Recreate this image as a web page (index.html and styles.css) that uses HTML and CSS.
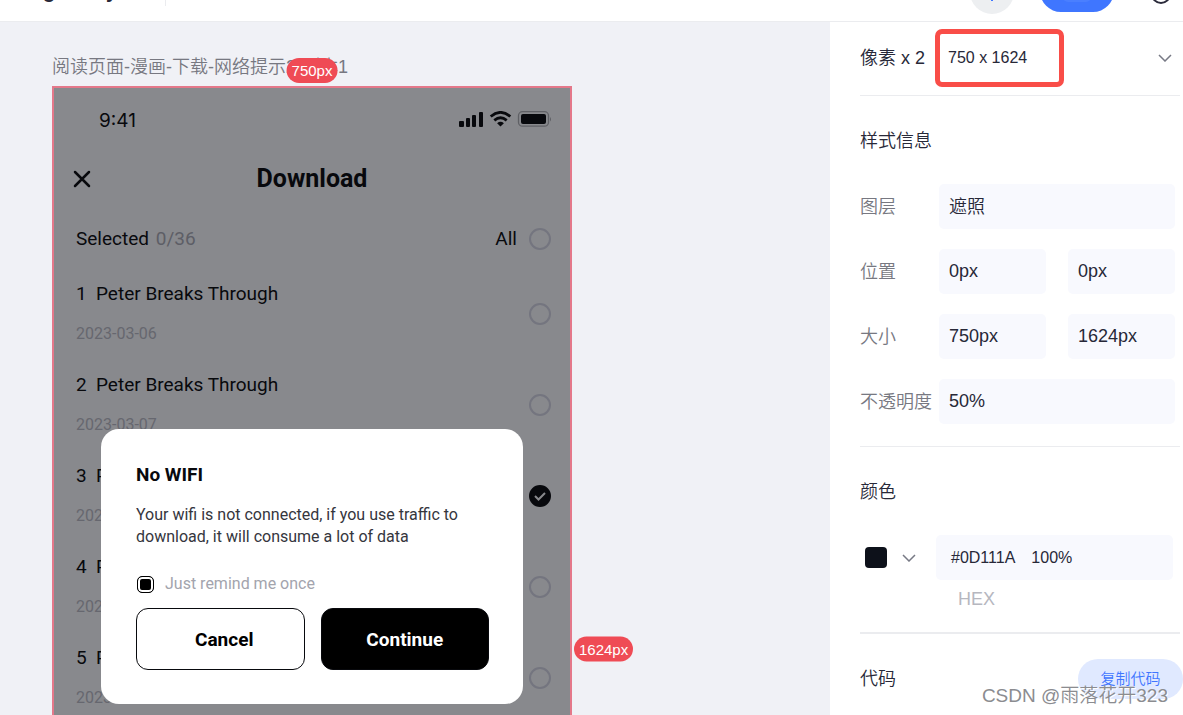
FILE: index.html
```html
<!DOCTYPE html>
<html lang="zh-CN">
<head>
    <meta charset="UTF-8">
    <meta name="viewport" content="width=device-width, initial-scale=1.0">
    <title>阅读页面-漫画-下载</title>
    <link rel="stylesheet" href="styles.css">
</head>
<body>
    <header class="topbar">
        <span class="project">g</span>
        <span class="project project-end">y</span>
        <span class="topbar-line"></span>
        <div class="topbar-actions">
            <button class="btn-round" aria-label="+"><svg width="20" height="20" viewBox="0 0 20 20"><path d="M10 1v18M2 10h16" stroke="#3f76ff" stroke-width="2"/></svg></button>
            <button class="btn-blue"><span class="btn-blue-inner"></span></button>
            <svg class="avatar" width="22" height="22" viewBox="0 0 22 22"><circle cx="11" cy="11" r="9" fill="none" stroke="#2b2b3b" stroke-width="2"/></svg>
        </div>
    </header>

    <div class="workspace">
        <main class="canvas">
            <h1 class="artboard-name">阅读页面-漫画-下载-网络提示2-副本1</h1>
            <div class="artboard">
                <span class="size-tag size-tag-width">750px</span>
                <span class="size-tag size-tag-height">1624px</span>
                <div class="screen">
                    <div class="status-bar">
                        <span class="clock">9:41</span>
                        <svg width="92" height="18" viewBox="0 0 92 18">
                            <g fill="#08090d">
                                <rect x="0" y="10" width="5" height="6" rx="1"/>
                                <rect x="7" y="7" width="4" height="9" rx="1"/>
                                <rect x="13" y="4" width="4" height="12" rx="1"/>
                                <rect x="20" y="1" width="4" height="15" rx="1"/>
                                <path d="M41.500 15.500l-3.400-3.300q3.400-2.700 6.800 0z"/>
                                <rect x="62" y="3" width="25" height="10" rx="2"/>
                            </g>
                            <g fill="none" stroke="#08090d" stroke-width="2.800">
                                <path d="M31.700 5.500q9.800-8.200 19.600 0"/>
                                <path d="M35.300 9.300q6.200-5 12.400 0"/>
                            </g>
                            <rect x="59.500" y=".700" width="30" height="14.500" rx="4" fill="none" stroke="#5f6065" stroke-width="1.300"/>
                            <path d="M91 6q2 2 0 4.500z" fill="#5f6065"/>
                        </svg>
                    </div>
                    <div class="nav-bar">
                        <button class="close" aria-label="Close"><svg width="18" height="18" viewBox="0 0 18 18"><path d="M2 2l14 14M16 2L2 16" stroke="#08090d" stroke-width="2.500" stroke-linecap="round"/></svg></button>
                        <h2 class="screen-title">Download</h2>
                    </div>
                    <div class="select-bar">
                        <span>Selected <span class="muted">0/36</span></span>
                        <label class="all">All <input class="circle" type="checkbox"></label>
                    </div>
                    <ul class="chapters">
                        <li class="chapter">
                            <label for="ch1"><span class="num">1</span>Peter Breaks Through</label>
                            <input class="circle" type="checkbox" id="ch1">
                            <span class="date">2023-03-06</span>
                        </li>
                        <li class="chapter">
                            <label for="ch2"><span class="num">2</span>Peter Breaks Through</label>
                            <input class="circle" type="checkbox" id="ch2">
                            <span class="date">2023-03-07</span>
                        </li>
                        <li class="chapter">
                            <label for="ch3"><span class="num">3</span>Peter Breaks Through</label>
                            <span class="checked-box">
                                <input class="circle" type="checkbox" id="ch3" checked>
                                <svg class="tick" width="22" height="22" viewBox="0 0 22 22"><path d="M6 11l3.500 3.500L16 8" fill="none" stroke="#88898d" stroke-width="2"/></svg>
                            </span>
                            <span class="date">2023-03-08</span>
                        </li>
                        <li class="chapter">
                            <label for="ch4"><span class="num">4</span>Peter Breaks Through</label>
                            <input class="circle" type="checkbox" id="ch4">
                            <span class="date">2023-03-09</span>
                        </li>
                        <li class="chapter">
                            <label for="ch5"><span class="num">5</span>Peter Breaks Through</label>
                            <input class="circle" type="checkbox" id="ch5">
                            <span class="date">2023-03-10</span>
                        </li>
                    </ul>
                </div>

                <div class="dialog" role="dialog" aria-labelledby="dialogTitle">
                    <h3 class="dialog-title" id="dialogTitle">No WIFI</h3>
                    <p class="dialog-text">Your wifi is not connected, if you use traffic to download, it will consume a lot of data</p>
                    <label class="remind"><input class="remind-box" type="checkbox" checked>Just remind me once</label>
                    <div class="dialog-buttons">
                        <button class="btn">Cancel</button>
                        <button class="btn btn-dark">Continue</button>
                    </div>
                </div>
            </div>
        </main>

        <aside class="panel">
            <section class="section device">
                <span class="scale">像素 x 2</span>
                <span class="resolution">750 x 1624</span>
                <button class="chevron" aria-label="展开"><svg width="14" height="8" viewBox="0 0 14 8"><path d="M1 1l6 6 6-6" fill="none" stroke="#777985" stroke-width="1.500"/></svg></button>
            </section>

            <section class="section styles">
                <h2 class="section-title">样式信息</h2>
                <div class="field">
                    <label for="layer">图层</label>
                    <input class="layer-name" type="text" id="layer" value="遮照">
                </div>
                <div class="field">
                    <label for="posX">位置</label>
                    <input type="text" id="posX" value="0px">
                    <input type="text" aria-label="Y" value="0px">
                </div>
                <div class="field">
                    <label for="width">大小</label>
                    <input type="text" id="width" value="750px">
                    <input type="text" aria-label="高" value="1624px">
                </div>
                <div class="field">
                    <label for="opacity">不透明度</label>
                    <input type="text" id="opacity" value="50%">
                </div>
            </section>

            <section class="section colors">
                <h2 class="section-title">颜色</h2>
                <div class="color-row">
                    <span class="swatch"></span>
                    <button class="chevron" aria-label="颜色格式"><svg width="14" height="8" viewBox="0 0 14 8"><path d="M1 1l6 6 6-6" fill="none" stroke="#777985" stroke-width="1.500"/></svg></button>
                    <div class="color-value"><span>#0D111A</span><span>100%</span></div>
                    <span class="format">HEX</span>
                </div>
            </section>

            <section class="code">
                <h2 class="section-title">代码</h2>
                <button class="copy">复制代码</button>
            </section>
        </aside>
    </div>
    <div class="watermark">CSDN @雨落花开323</div>
</body>
</html>
```
FILE: styles.css
```css
* {
    box-sizing: border-box;
}
body {
    display: flex;
    flex-direction: column;
    height: 100vh;
    margin: 0;
    overflow: hidden;
    background: #f0f1f6;
    color: #272838;
    font-family: "Liberation Sans", "Noto Sans CJK SC", sans-serif;
    font-size: 18px;
    font-weight: 350;
}
h1, h2, h3, p, ul {
    margin: 0;
    padding: 0;
    font-weight: inherit;
}
button {
    padding: 0;
    border: none;
    background: none;
    font-family: inherit;
    font-weight: inherit;
    cursor: pointer;
}
svg {
    display: block;
}

/* top bar, scrolled mostly out of view */
.topbar {
    display: flex;
    align-items: flex-end;
    flex: none;
    height: 22px;
    padding-left: 43px;
    overflow: hidden;
    border-bottom: 1px solid #ebecef;
    background: #fff;
}
.project {
    width: 63px;
    padding-bottom: 18px;
    font-size: 20px;
    font-weight: bold;
    line-height: 24px;
}
.project-end {
    width: 59px;
}
.topbar-line {
    width: 1px;
    height: 28px;
    margin-bottom: 15px;
    background: #ebecef;
}
.topbar-actions {
    display: flex;
    align-items: flex-end;
    gap: 26px;
    margin-left: auto;
    padding: 0 11px 7px 0;
}
.btn-round {
    display: grid;
    place-items: center;
    width: 44px;
    height: 44px;
    border-radius: 50%;
    background: #edeff1;
}
.btn-blue {
    display: flex;
    align-items: flex-end;
    justify-content: center;
    width: 74px;
    height: 42px;
    margin-bottom: 2px;
    padding-bottom: 10px;
    border-radius: 21px;
    background: #3f76ff;
}
.btn-blue-inner {
    width: 28px;
    height: 20px;
    border-radius: 5px;
    background: #4a7fff;
}
.avatar {
    margin: 0 0 9px 10px;
}

.workspace {
    display: flex;
    flex: 1;
    min-height: 0;
}
.canvas {
    flex: 1;
    padding: 33px 0 0 52px;
    overflow: hidden;
}
.artboard-name {
    margin-bottom: 7px;
    color: #777881;
    font-size: 18px;
    line-height: 24px;
}
.artboard {
    position: relative;
    width: 520px;
    height: 1126px;
    border: 2px solid #e4788a;
    background: #88898d;
    color: #08090d;
    font-family: Roboto, "Liberation Sans", sans-serif;
    font-weight: 400;
}
.size-tag {
    position: absolute;
    padding: 0 5px;
    border-radius: 13px;
    background: #ef4b55;
    color: #fff;
    font-family: "Liberation Sans", sans-serif;
    font-size: 15px;
    line-height: 25px;
}
.size-tag-width {
    bottom: 100%;
    left: 50%;
    margin-bottom: 5px;
    transform: translateX(-50%);
}
.size-tag-height {
    top: 50%;
    left: 100%;
    margin-left: 4px;
    transform: translateY(-50%);
}

/* phone screen */
.screen {
    padding: 20px 19px 0 22px;
    font-size: 19px;
}
.status-bar {
    display: flex;
    justify-content: space-between;
    align-items: center;
    height: 24px;
    padding-left: 23px;
}
.clock {
    font-family: Inter, sans-serif;
    font-size: 19px;
}
.nav-bar {
    display: grid;
    grid-template-columns: 18px 1fr 18px;
    align-items: center;
    margin: 31px 0 0 -3px;
}
.screen-title {
    font-size: 25px;
    font-weight: bold;
    line-height: 32px;
    text-align: center;
}
.select-bar {
    display: flex;
    justify-content: space-between;
    align-items: center;
    margin-top: 32px;
    line-height: 24px;
}
.muted {
    margin-left: 2px;
    color: #5d5e66;
}
.all {
    display: flex;
    align-items: center;
    gap: 12px;
}
.circle {
    display: block;
    width: 22px;
    height: 22px;
    margin: 0;
    border: 2px solid #74757f;
    border-radius: 50%;
    appearance: none;
}
.circle:checked {
    border-color: #08090d;
    background: #08090d;
}
.chapters {
    margin-top: 31px;
    list-style: none;
}
.chapter {
    display: grid;
    grid-template-columns: 1fr 22px;
    align-items: center;
    row-gap: 16px;
    height: 62px;
    margin-bottom: 29px;
    line-height: 24px;
}
.chapter .circle,
.checked-box {
    grid-column: 2;
    grid-row: 1 / 3;
}
.num {
    display: inline-block;
    width: 20px;
}
.date {
    grid-column: 1;
    color: #66676f;
    font-size: 16px;
}
.checked-box {
    position: relative;
}
.tick {
    position: absolute;
    top: 0;
    left: 0;
    pointer-events: none;
}

/* no wifi dialog */
.dialog {
    position: absolute;
    top: 341px;
    left: 47px;
    right: 47px;
    padding: 34px 34px 34px 35px;
    border-radius: 18px;
    background: #fff;
}
.dialog-title {
    font-size: 19px;
    font-weight: bold;
    line-height: 24px;
}
.dialog-text {
    margin-top: 17px;
    color: #35363d;
    font-size: 16px;
    line-height: 22px;
}
.remind {
    display: flex;
    align-items: center;
    gap: 11px;
    margin-top: 24px;
    color: #a3a4ad;
    font-size: 16px;
    line-height: 24px;
}
.remind-box {
    width: 17px;
    height: 17px;
    margin: 0 0 0 1px;
    border: 1px solid #000;
    border-radius: 5px;
    background: #000;
    box-shadow: inset 0 0 0 2px #fff;
    appearance: none;
}
.dialog-buttons {
    display: grid;
    grid-template-columns: 1fr 1fr;
    gap: 16px;
    margin-top: 12px;
}
.btn {
    height: 62px;
    padding-left: 8px;
    border: 1px solid #08090d;
    border-radius: 12px;
    background: #fff;
    color: #000;
    font-size: 19px;
    font-weight: bold;
}
.btn-dark {
    padding-left: 0;
    background: #000;
    color: #fff;
}

/* right panel */
.panel {
    width: 353px;
    padding: 0 3px 0 30px;
    background: #fff;
}
.section {
    border-bottom: 1px solid #ebecef;
}
.device {
    display: flex;
    align-items: center;
    height: 74px;
    padding: 0 8px 2px 0;
}
.scale {
    width: 75px;
    padding-bottom: 4px;
    white-space: nowrap;
}
.resolution {
    width: 129px;
    padding-left: 8px;
    border: 5px solid #f94d48;
    border-radius: 7px;
    font-size: 16px;
    line-height: 48px;
}
.device .chevron {
    margin-left: auto;
}
.section-title {
    font-size: 18px;
    line-height: 24px;
}
.styles {
    padding: 33px 5px 22px 0;
}
.styles .section-title {
    margin-bottom: 31px;
}
.field {
    display: grid;
    grid-template-columns: 57px 1fr 1fr;
    column-gap: 22px;
    align-items: center;
    margin-top: 20px;
}
.field label {
    padding-bottom: 4px;
    color: #777881;
    white-space: nowrap;
}
.field input {
    width: 100%;
    height: 45px;
    padding: 0 10px;
    border: none;
    border-radius: 5px;
    background: #f8f9fe;
    color: #272838;
    font-family: inherit;
    font-size: 18px;
    font-weight: inherit;
}
.field .layer-name {
    padding-bottom: 4px;
}
.field input:last-child:nth-child(2) {
    grid-column: 2 / 4;
}
.colors {
    padding: 33px 7px 21px 0;
    border-bottom-width: 2px;
}
.color-row {
    display: grid;
    grid-template-columns: 32px 34px 1fr;
    column-gap: 5px;
    align-items: center;
    margin-top: 31px;
}
.swatch {
    width: 22px;
    height: 21px;
    margin-left: 5px;
    border-radius: 4px;
    background: #0d111a;
}
.color-row .chevron {
    margin-left: 5px;
}
.color-value {
    display: flex;
    gap: 16px;
    padding-left: 15px;
    border-radius: 5px;
    background: #f8f9fe;
    font-size: 16px;
    line-height: 45px;
}
.format {
    grid-column: 3;
    padding: 7px 0 0 22px;
    color: #b6b7bf;
    font-size: 18px;
    line-height: 24px;
}
.code {
    display: flex;
    justify-content: space-between;
    align-items: center;
    margin: 25px -3px 0 0;
}
.copy {
    width: 105px;
    height: 40px;
    padding-bottom: 4px;
    border-radius: 20px;
    background: #e0e9ff;
    color: #3f76ff;
    font-size: 15px;
}
.watermark {
    position: absolute;
    right: 15px;
    bottom: 4px;
    color: #8b8c90;
    font-size: 19px;
    line-height: 30px;
    text-shadow: 1px 1px 0 #fff;
}
```
